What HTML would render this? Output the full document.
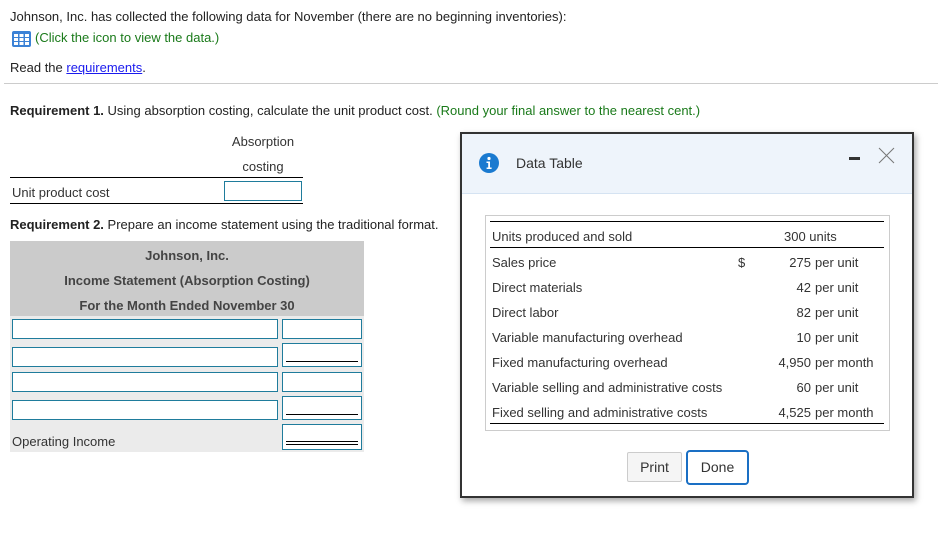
<!DOCTYPE html><html><head><style>
body{margin:0;width:938px;height:558px;background:#fff;font-family:"Liberation Sans",Arial,sans-serif;font-size:13px;color:#222;position:relative;overflow:hidden}
.a{position:absolute;white-space:nowrap}
.in{position:absolute;border:1px solid #1f7c9c;background:#fff;box-sizing:border-box}
.b{font-weight:bold}
.ln{position:absolute;height:0;border-top:1px solid #000}
</style></head><body>
<div class="a" style="left:10px;top:9px">Johnson, Inc. has collected the following data for November (there are no beginning inventories):</div>
<svg class="a" style="left:12px;top:31px" width="19" height="16" viewBox="0 0 19 16"><rect x="0" y="0" width="19" height="16" rx="2" fill="#3b82d6"/><g fill="#fff"><rect x="2" y="3" width="4" height="3"/><rect x="7.5" y="3" width="4" height="3"/><rect x="13" y="3" width="4" height="3"/><rect x="2" y="7" width="4" height="3"/><rect x="7.5" y="7" width="4" height="3"/><rect x="13" y="7" width="4" height="3"/><rect x="2" y="11" width="4" height="3"/><rect x="7.5" y="11" width="4" height="3"/><rect x="13" y="11" width="4" height="3"/></g></svg>
<div class="a" style="left:35px;top:30px;color:#1a7a1a">(Click the icon to view the data.)</div>
<div class="a" style="left:10px;top:60px">Read the <span style="color:#1a1aee;text-decoration:underline">requirements</span>.</div>
<div class="a" style="left:4px;top:83px;width:934px;border-top:1px solid #ccc"></div>
<div class="a" style="left:10px;top:103px"><span class="b">Requirement 1.</span> Using absorption costing, calculate the unit product cost. <span style="color:#1a7a1a">(Round your final answer to the nearest cent.)</span></div>
<div class="a" style="left:223px;width:80px;text-align:center;top:134px;color:#333">Absorption</div>
<div class="a" style="left:223px;width:80px;text-align:center;top:159px;color:#333">costing</div>
<div class="ln" style="left:10px;top:177px;width:293px"></div>
<div class="a" style="left:12px;top:185px;color:#333">Unit product cost</div>
<div class="in" style="left:224px;top:181px;width:78px;height:20px"></div>
<div class="ln" style="left:10px;top:203px;width:293px"></div>
<div class="a" style="left:10px;top:217px"><span class="b">Requirement 2.</span> Prepare an income statement using the traditional format.</div>
<div class="a" style="left:10px;top:241px;width:354px;height:75px;background:#cbcbcb"></div>
<div class="a b" style="left:10px;width:354px;text-align:center;top:248px;color:#444">Johnson, Inc.</div>
<div class="a b" style="left:10px;width:354px;text-align:center;top:273px;color:#444">Income Statement (Absorption Costing)</div>
<div class="a b" style="left:10px;width:354px;text-align:center;top:298px;color:#444">For the Month Ended November 30</div>
<div class="a" style="left:10px;top:316px;width:354px;height:136px;background:#ebebeb"></div>
<div class="in" style="left:12px;top:319px;width:266px;height:20px"></div>
<div class="in" style="left:282px;top:319px;width:80px;height:20px"></div>
<div class="in" style="left:12px;top:347px;width:266px;height:20px"></div>
<div class="in" style="left:282px;top:343px;width:80px;height:24px"><div class="ln" style="left:3px;top:17px;width:72px"></div></div>
<div class="in" style="left:12px;top:372px;width:266px;height:20px"></div>
<div class="in" style="left:282px;top:372px;width:80px;height:20px"></div>
<div class="in" style="left:12px;top:400px;width:266px;height:20px"></div>
<div class="in" style="left:282px;top:396px;width:80px;height:24px"><div class="ln" style="left:3px;top:17px;width:72px"></div></div>
<div class="a" style="left:12px;top:434px;color:#333">Operating Income</div>
<div class="in" style="left:282px;top:424px;width:80px;height:26px"><div class="ln" style="left:3px;top:16px;width:72px"></div><div class="ln" style="left:3px;top:19px;width:72px"></div></div>

<div class="a" style="left:460px;top:132px;width:450px;height:362px;border:2px solid #333;background:#fff;box-shadow:2px 3px 6px rgba(0,0,0,.35)">
 <div class="a" style="left:0;top:0;width:450px;height:59px;background:#eef4fb;border-bottom:1px solid #d5e3f2"></div>
</div>
<svg class="a" style="left:479px;top:153px" width="20" height="20"><circle cx="10" cy="10" r="10" fill="#1a7ad0"/><circle cx="10" cy="5.5" r="1.6" fill="#fff"/><path d="M7.5 8.5h3.5v6h1.6v1.5h-5v-1.5h1.6v-4.5h-1.7z" fill="#fff"/></svg>
<div class="a" style="left:516px;top:155px;font-size:14px;color:#333">Data Table</div>
<div class="a" style="left:849px;top:157px;width:11px;height:3px;background:#333"></div>
<svg class="a" style="left:878px;top:147px" width="17" height="17"><path d="M1 1L16 16M16 1L1 16" stroke="#777" stroke-width="1"/></svg>
<div class="a" style="left:485px;top:215px;width:403px;height:214px;border:1px solid #ccc"></div>
<div class="ln" style="left:490px;top:221px;width:394px"></div>
<div class="ln" style="left:490px;top:247px;width:394px"></div>
<div class="ln" style="left:490px;top:423px;width:394px"></div>
<div class="a" style="left:492px;top:229px;color:#333">Units produced and sold</div>
<div class="a" style="left:784px;top:229px;color:#333">300 units</div>
<div class="a" style="left:738px;top:255px;color:#333">$</div>
<div class="a" style="left:492px;top:255px;color:#333">Sales price</div>
<div class="a" style="left:492px;top:280px;color:#333">Direct materials</div>
<div class="a" style="left:492px;top:305px;color:#333">Direct labor</div>
<div class="a" style="left:492px;top:330px;color:#333">Variable manufacturing overhead</div>
<div class="a" style="left:492px;top:355px;color:#333">Fixed manufacturing overhead</div>
<div class="a" style="left:492px;top:380px;color:#333">Variable selling and administrative costs</div>
<div class="a" style="left:492px;top:405px;color:#333">Fixed selling and administrative costs</div>
<div class="a" style="left:741px;width:70px;text-align:right;top:255px;color:#333">275</div><div class="a" style="left:815px;top:255px;color:#333">per unit</div>
<div class="a" style="left:741px;width:70px;text-align:right;top:280px;color:#333">42</div><div class="a" style="left:815px;top:280px;color:#333">per unit</div>
<div class="a" style="left:741px;width:70px;text-align:right;top:305px;color:#333">82</div><div class="a" style="left:815px;top:305px;color:#333">per unit</div>
<div class="a" style="left:741px;width:70px;text-align:right;top:330px;color:#333">10</div><div class="a" style="left:815px;top:330px;color:#333">per unit</div>
<div class="a" style="left:741px;width:70px;text-align:right;top:355px;color:#333">4,950</div><div class="a" style="left:815px;top:355px;color:#333">per month</div>
<div class="a" style="left:741px;width:70px;text-align:right;top:380px;color:#333">60</div><div class="a" style="left:815px;top:380px;color:#333">per unit</div>
<div class="a" style="left:741px;width:70px;text-align:right;top:405px;color:#333">4,525</div><div class="a" style="left:815px;top:405px;color:#333">per month</div>
<div class="a" style="left:627px;top:452px;width:55px;height:30px;box-sizing:border-box;border:1px solid #ccc;border-radius:2px;background:#f5f5f5;text-align:center;line-height:28px;font-size:14px;color:#333">Print</div>
<div class="a" style="left:686px;top:450px;width:63px;height:35px;box-sizing:border-box;border:2px solid #1a6fc4;border-radius:4px;background:#fff;text-align:center;line-height:31px;font-size:14px;color:#333">Done</div>
</body></html>
